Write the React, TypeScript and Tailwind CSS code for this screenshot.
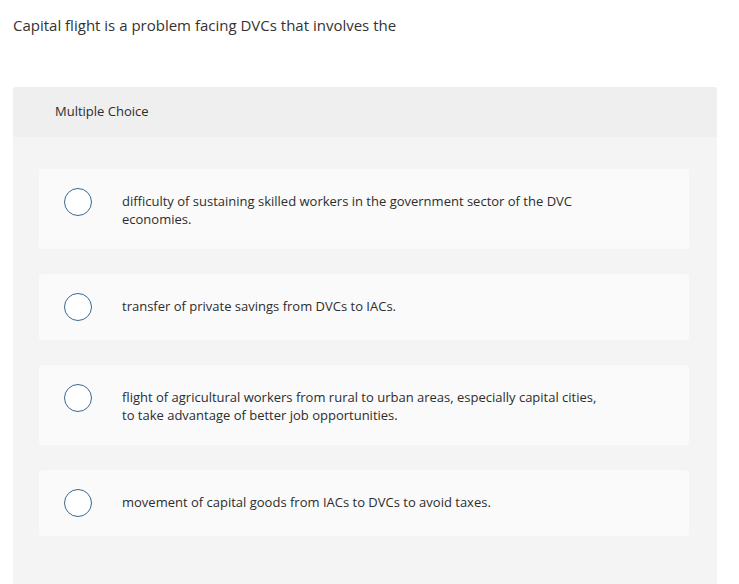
const options = [
  "difficulty of sustaining skilled workers in the government sector of the DVC economies.",
  "transfer of private savings from DVCs to IACs.",
  "flight of agricultural workers from rural to urban areas, especially capital cities, to take advantage of better job opportunities.",
  "movement of capital goods from IACs to DVCs to avoid taxes.",
];

function Radio() {
  return (
    <span className="block w-[28px] h-[28px] shrink-0 rounded-full border-[1.5px] border-[#3a6890] bg-white" />
  );
}

export default function App() {
  return (
    <div className="min-h-[584px] bg-white font-['Open_Sans','Lato',sans-serif] text-[#2d2d2d]">
      <p className="pt-[15px] pl-[13px] text-[15px] leading-[20px] text-[#333]">
        Capital flight is a problem facing DVCs that involves the
      </p>

      <div className="mx-[13px] mt-[52px] w-[704px] rounded-t-[3px] bg-[#f4f4f4] pb-[60px]">
        <div className="flex h-[50px] items-center rounded-t-[3px] bg-[#efefef] pl-[42px] text-[13px]">
          Multiple Choice
        </div>

        <div className="flex flex-col gap-[25px] pl-[26px] pr-[28px] pt-[32px]">
          {options.map((text) => (
            <div key={text} className="flex items-start rounded-[3px] bg-[#fafafa] py-[19px] pl-[25px] pr-[84px]">
              <Radio />
              <p className="ml-[30px] pt-[4px] pb-[2px] text-[13px] leading-[18px] text-[#2d2d2d]">{text}</p>
            </div>
          ))}
        </div>
      </div>
    </div>
  );
}
